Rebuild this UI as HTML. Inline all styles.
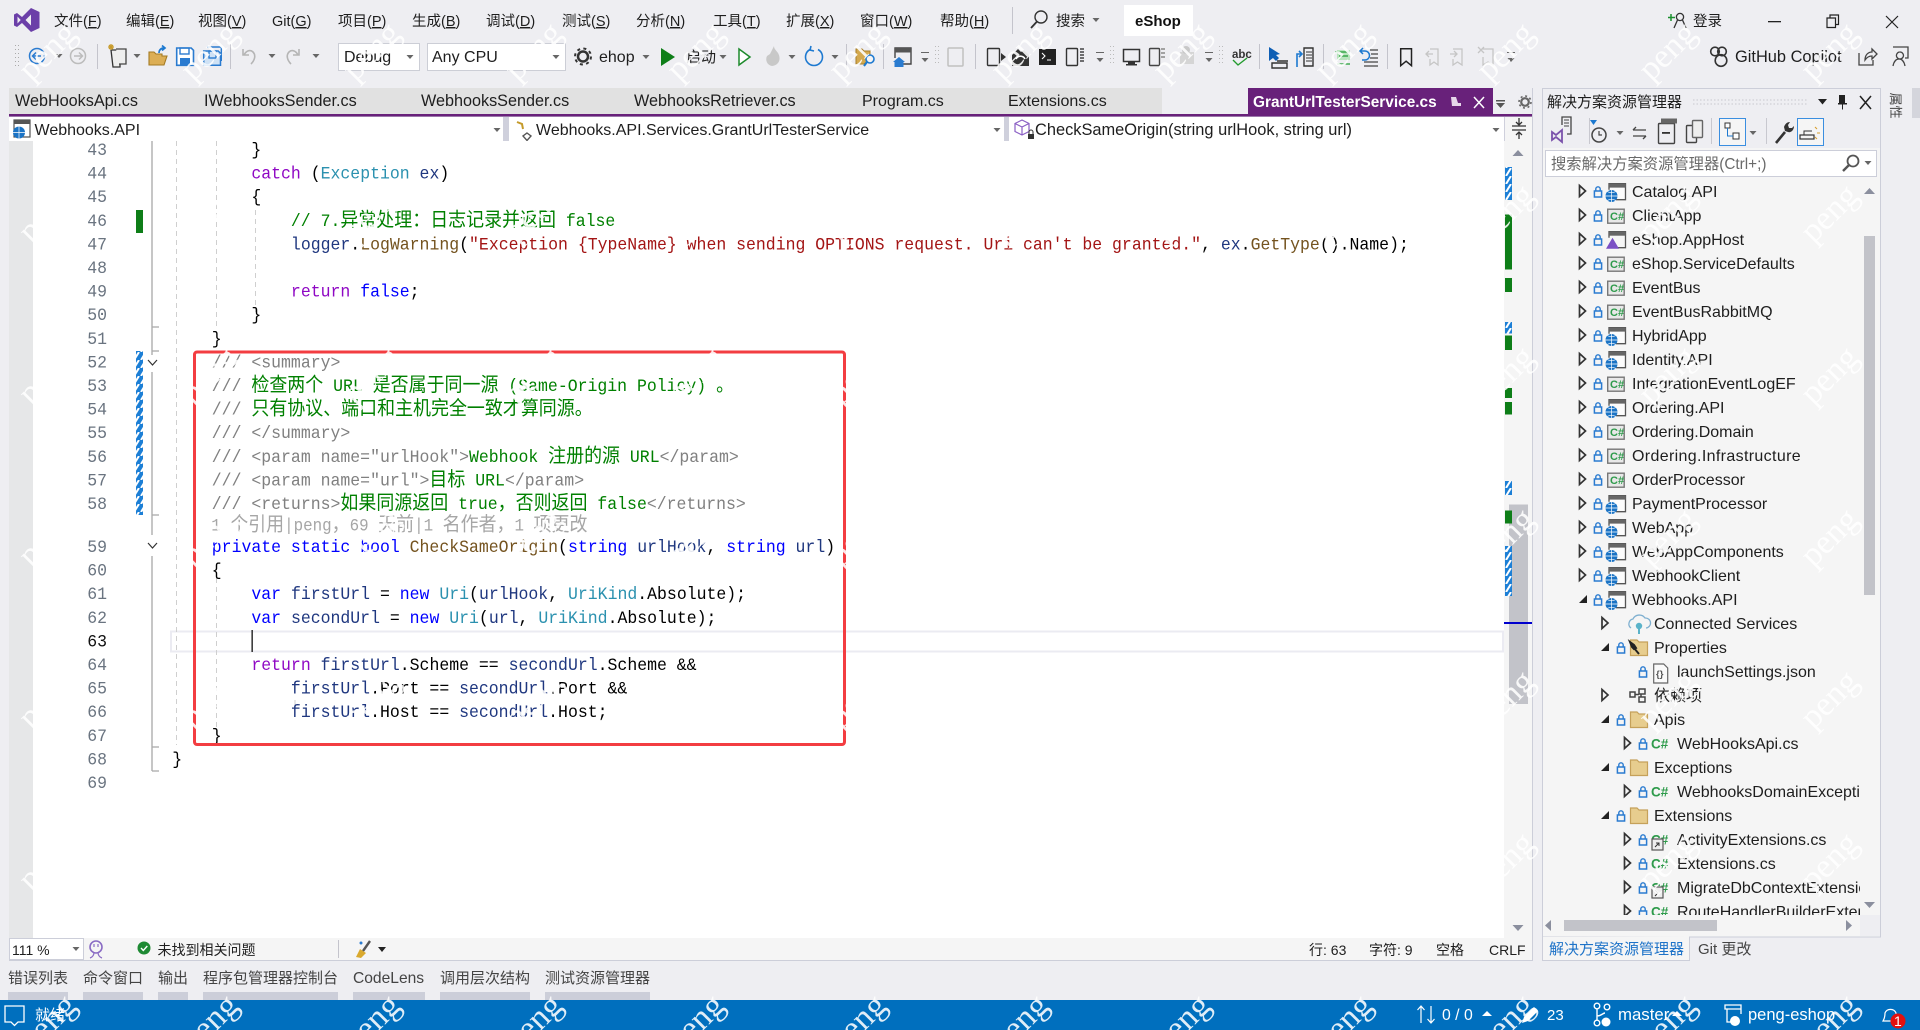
<!DOCTYPE html>
<html lang="zh-CN">
<head>
<meta charset="utf-8">
<title>eShop - Visual Studio</title>
<style>
html,body{margin:0;padding:0;background:#eeeef2;width:1920px;height:1030px;overflow:hidden}
svg{display:block}
text{font-family:"Liberation Sans","Noto Sans CJK SC",sans-serif;white-space:pre;fill:#1e1e1e}
.m{font-size:14.5px}
.f16{font-size:16px}
.f15{font-size:15px}
.f14{font-size:14px}
.tb{font-size:16.2px}
.c{font-family:"Liberation Mono","Noto Sans CJK SC",monospace;font-size:18px;fill:#000}
.ln{font-family:"Liberation Mono",monospace;font-size:18px;fill:#6a7480;text-anchor:end}
.z{font-family:"Noto Sans CJK SC",sans-serif;font-size:19.6px}
.k{fill:#0000ff}.p{fill:#8f08c4}.t{fill:#2b91af}.s{fill:#a31515}.g{fill:#008000}.d{fill:#808080}.n{fill:#1f377f}.h{fill:#74531f}
.tr{font-size:16px;fill:#1e1e1e}
.w{fill:#fff}
.u{text-decoration:underline}
</style>
</head>
<body>
<svg xmlns="http://www.w3.org/2000/svg" width="1920" height="1030" viewBox="0 0 1920 1030">
<defs>
<pattern id="wm" x="-34" y="-30" width="162" height="162" patternUnits="userSpaceOnUse">
<text x="81" y="92" text-anchor="middle" transform="rotate(-45 81 81)" style="font-family:'Liberation Serif',serif;font-size:34px;fill:#fff;fill-opacity:.88">peng</text>
</pattern>
<pattern id="hatch" width="7" height="8" patternUnits="userSpaceOnUse">
<rect width="7" height="8" fill="#1c7fd6"/><path d="M1 8L6 0" stroke="#fff" stroke-width="2"/>
</pattern>
<path id="car" d="M-3.5 -2H3.5L0 2z" fill="#666"/>
<path id="ctri" d="M-3 -5.5L3 0L-3 5.5z" fill="none" stroke="#333" stroke-width="1.7"/>
<path id="etri" d="M4 -4V4H-4z" fill="#222"/>
<g id="lock"><rect x="-3.6" y="-1" width="7.2" height="6" fill="none" stroke="#2a7bd0" stroke-width="1.5"/><path d="M-2.2 -1V-3A2.2 2.2 0 0 1 2.2 -3V-1" fill="none" stroke="#2a7bd0" stroke-width="1.4"/></g>
<g id="web"><path d="M2 -2V-8H18.5V8H9" fill="none" stroke="#555" stroke-width="1.3"/><rect x="2" y="-8" width="16.5" height="4" fill="#666"/><rect x="3" y="-4" width="14.5" height="11" fill="#fff" fill-opacity=".7"/><circle cx="4.5" cy="4.3" r="6" fill="#1a73c5"/><path d="M-1.5 4.3H10.5M4.5 -1.7V10.3M.5 0Q4.5 2 8.5 0M.5 8.6Q4.5 6.6 8.5 8.6" stroke="#fff" stroke-width=".7" fill="none"/></g>
<g id="cs"><rect x="0.7" y="-6.5" width="16.5" height="14" fill="#e8e8e8" stroke="#777" stroke-width="1.4"/><text x="3" y="4.4" style="font-size:11px;font-weight:bold;fill:#2e9b4b">C#</text></g>
<g id="host"><path d="M2 -2V-8H18.5V8H9" fill="none" stroke="#555" stroke-width="1.3"/><rect x="2" y="-8" width="16.5" height="4" fill="#666"/><path d="M-1 9L5.5 -2L12 9z" fill="#7a4fc4"/></g>
<g id="fol"><path d="M0.5 -7.5H7L9 -5.5H17.5V8H0.5z" fill="#e7cd8e" stroke="#c5a15a" stroke-width="1.2"/></g>
<text id="csf" x="0" y="5" style="font-size:13.5px;font-weight:bold;fill:#2e9b4b">C#</text>
</defs>

<!-- background -->
<rect width="1920" height="1030" fill="#eeeef2"/>

<!-- title bar -->
<path fill-rule="evenodd" d="M31 8l8.5 4v16L31 32l-9-9-5 4-3-1.5v-11l3-1.5 5 4zM31 14.5l-5.5 5.500 5.500 5.500zM17.500 16.500v7l3.200-3.500z" fill="#6b3fa8"/>
<text class="m" x="54" y="26">文件(<tspan class="u">F</tspan>)</text>
<text class="m" x="126" y="26">编辑(<tspan class="u">E</tspan>)</text>
<text class="m" x="198" y="26">视图(<tspan class="u">V</tspan>)</text>
<text class="m" x="272" y="26">Git(<tspan class="u">G</tspan>)</text>
<text class="m" x="338" y="26">项目(<tspan class="u">P</tspan>)</text>
<text class="m" x="412" y="26">生成(<tspan class="u">B</tspan>)</text>
<text class="m" x="486" y="26">调试(<tspan class="u">D</tspan>)</text>
<text class="m" x="562" y="26">测试(<tspan class="u">S</tspan>)</text>
<text class="m" x="636" y="26">分析(<tspan class="u">N</tspan>)</text>
<text class="m" x="713" y="26">工具(<tspan class="u">T</tspan>)</text>
<text class="m" x="786" y="26">扩展(<tspan class="u">X</tspan>)</text>
<text class="m" x="860" y="26">窗口(<tspan class="u">W</tspan>)</text>
<text class="m" x="940" y="26">帮助(<tspan class="u">H</tspan>)</text>
<rect x="1012" y="7" width="1" height="27" fill="#c4c4cc"/>
<circle cx="1041" cy="17" r="6" fill="none" stroke="#333" stroke-width="1.4"/><path d="M1037 21.5L1031 28" stroke="#333" stroke-width="1.8"/>
<text class="m" x="1056" y="26">搜索</text>
<use href="#car" x="1096" y="20"/>
<rect x="1124" y="5" width="69" height="31" fill="#fff"/>
<text x="1135" y="26" style="font-size:15px;font-weight:bold;fill:#111">eShop</text>
<path d="M1671 14v7M1668 17.5h7" stroke="#1a8f2e" stroke-width="1.5"/>
<circle cx="1680" cy="17" r="3.6" fill="none" stroke="#333" stroke-width="1.3"/><path d="M1674 28l3.5-8M1686 28l-3.5-8" stroke="#333" stroke-width="1.3" fill="none"/>
<text class="m" x="1693" y="26">登录</text>
<rect x="1768" y="21" width="13" height="1.3" fill="#222"/>
<path d="M1827 18h8.5v9.5h-8.5zM1830 18v-3h8.5v9.5h-3" fill="none" stroke="#222" stroke-width="1.2"/>
<path d="M1886 16l12 12M1898 16l-12 12" stroke="#222" stroke-width="1.2"/>

<!-- toolbar -->
<g fill="#aaa"><path d="M15 45h1v1h-1zM18 45h1v1h-1zM15 49h1v1h-1zM18 49h1v1h-1zM15 53h1v1h-1zM18 53h1v1h-1zM15 57h1v1h-1zM18 57h1v1h-1zM15 61h1v1h-1zM18 61h1v1h-1zM15 65h1v1h-1zM18 65h1v1h-1z"/></g>
<circle cx="37" cy="56" r="7.5" fill="none" stroke="#2a7bd0" stroke-width="1.5"/><path d="M41 56h-8M36 52.5L32.5 56l3.5 3.5" fill="none" stroke="#2a7bd0" stroke-width="1.5"/>
<use href="#car" x="59" y="56"/>
<circle cx="78" cy="56" r="7.5" fill="none" stroke="#bcbcbc" stroke-width="1.5"/><path d="M74 56h8M79 52.5L82.5 56 79 59.5" fill="none" stroke="#bcbcbc" stroke-width="1.5"/>
<rect x="97" y="44" width="1" height="25" fill="#c4c4cc"/>
<path d="M111 50h9v17h-7z" fill="#eee" stroke="#333" stroke-width="1.3"/><path d="M116 49h10v15h-7" fill="#eee" stroke="#444" stroke-width="1.3"/>
<path d="M111 44v6M108 47h6M109 45l4 4M113 45l-4 4" stroke="#c79a2b" stroke-width="1.3"/>
<use href="#car" x="137" y="56"/>
<path d="M149 65V52h5l2 2h6v2h5l-3 9z" fill="#dcae55" stroke="#a47b24" stroke-width="1.1"/><path d="M159 53c0-3 2-5 5-5M162 45.5l3 2.5-3 2.5" fill="none" stroke="#1d79d0" stroke-width="1.7"/>
<path d="M176.7 48h14.5l2.3 2.3v15h-16.8z" fill="#fff" stroke="#2a7bd0" stroke-width="1.6"/><rect x="180" y="48" width="9" height="6" fill="none" stroke="#2a7bd0" stroke-width="1.4"/><rect x="180" y="58" width="10" height="7" fill="#2a7bd0"/>
<path d="M203.7 51h14.5l2.3 2.3v12h-16.8z" fill="#cfe2f5" stroke="#2a7bd0" stroke-width="1.5"/><path d="M207 47h13.5l.8 1v13" fill="none" stroke="#2a7bd0" stroke-width="1.4"/><rect x="209" y="51" width="7" height="7" fill="none" stroke="#2a7bd0" stroke-width="1.4"/>
<rect x="230" y="44" width="1" height="25" fill="#c4c4cc"/>
<path d="M243 49v6h6M244 55c2-4 6-6 9-3 3 3 2 8-2 12" fill="none" stroke="#b5b5b5" stroke-width="1.6"/>
<use href="#car" x="272" y="56"/>
<path d="M299 49v6h-6M298 55c-2-4-6-6-9-3-3 3-2 8 2 12" fill="none" stroke="#b5b5b5" stroke-width="1.6"/>
<use href="#car" x="316" y="56"/>
<rect x="338.500" y="43.500" width="81" height="27" fill="#fff" stroke="#ccced6"/>
<text class="f16" x="344" y="62">Debug</text>
<use href="#car" x="410" y="57"/>
<rect x="427.500" y="43.500" width="138" height="27" fill="#fff" stroke="#ccced6"/>
<text class="f16" x="432" y="62">Any CPU</text>
<use href="#car" x="556" y="57"/>
<circle cx="583" cy="56.500" r="5" fill="none" stroke="#333" stroke-width="2.5"/><circle cx="583" cy="56.500" r="8" fill="none" stroke="#333" stroke-width="2" stroke-dasharray="3 3.3"/>
<text class="f16" x="599" y="62">ehop</text>
<use href="#car" x="646" y="57"/>
<path d="M661 48L675 57L661 66z" fill="#0e7e18"/>
<text class="f15" x="686" y="62">启动</text>
<use href="#car" x="723" y="57"/>
<path d="M739 49L750 57L739 65z" fill="#fff" stroke="#1d8a2c" stroke-width="1.5"/>
<path d="M772 66c-5-1-7-6-5-10l3-2 1-2 3-6c0 3 2 4 4 7 3 5 2 12-6 13z" fill="#c8c8c8"/>
<use href="#car" x="792" y="57"/>
<path d="M818 49.500a8.500 8.500 0 1 1-8 0M811 46l-1 4 4 1" fill="none" stroke="#1d79d0" stroke-width="1.6"/>
<use href="#car" x="835" y="57"/>
<rect x="846" y="44" width="1" height="25" fill="#c4c4cc"/>
<path d="M856 64V49h6l2 2h6v8l-6 5z" fill="#d4a94e" stroke="#a87f2a"/>
<circle cx="870" cy="59" r="4" fill="#f4f4f4" stroke="#1d79d0" stroke-width="1.6"/><path d="M867 62l-3 4" stroke="#1d79d0" stroke-width="2"/>
<rect x="883" y="44" width="1" height="25" fill="#c4c4cc"/>
<path d="M895 58V48h16v16h-9" fill="none" stroke="#444" stroke-width="1.4"/><rect x="895" y="48" width="16" height="4.500" fill="#555"/>
<path d="M893 62l6-5 6 5h-1.500v5h-9v-5z" fill="#2a7bd0"/>
<use href="#car" x="925" y="60"/><rect x="921" y="52" width="8" height="1" fill="#666"/>
<g fill="#bbb"><path d="M935 46h1v1h-1zM938 46h1v1h-1zM935 50h1v1h-1zM938 50h1v1h-1zM935 54h1v1h-1zM938 54h1v1h-1zM935 58h1v1h-1zM938 58h1v1h-1zM935 62h1v1h-1zM938 62h1v1h-1z"/></g>
<rect x="948" y="48" width="15" height="18" rx="1" fill="none" stroke="#c0c0c0" stroke-width="1.5"/>
<rect x="975" y="44" width="1" height="25" fill="#c4c4cc"/>
<rect x="987.500" y="48.500" width="12" height="17" rx="1" fill="none" stroke="#333" stroke-width="1.4"/><path d="M1001 53l5 4-5 4z" fill="#333"/>
<path d="M1012 55l6-6 3 3 3-2 5 5v11h-17z" fill="#333"/><path d="M1016 59a5 5 0 0 1 9 0" fill="none" stroke="#fff" stroke-width="1.6"/>
<rect x="1039" y="49" width="17" height="16" fill="#222"/><path d="M1042 53l3 3-3 3M1047 60h4" fill="none" stroke="#fff" stroke-width="1.1"/>
<rect x="1066.500" y="48.500" width="11" height="17" rx="1" fill="none" stroke="#333" stroke-width="1.4"/><path d="M1080 49h4M1080 52h4M1080 55h4M1080 58h4M1080 61h4" stroke="#444" stroke-width="1.4"/>
<use href="#car" x="1100" y="60"/><rect x="1096" y="52" width="8" height="1" fill="#666"/>
<g fill="#bbb"><path d="M1110 46h1v1h-1zM1113 46h1v1h-1zM1110 50h1v1h-1zM1113 50h1v1h-1zM1110 54h1v1h-1zM1113 54h1v1h-1zM1110 58h1v1h-1zM1113 58h1v1h-1zM1110 62h1v1h-1zM1113 62h1v1h-1z"/></g>
<rect x="1123.500" y="49.500" width="16" height="12" fill="none" stroke="#333" stroke-width="1.5"/><rect x="1128" y="62" width="7" height="2" fill="#333"/><rect x="1126" y="64" width="11" height="1.500" fill="#333"/>
<rect x="1149.500" y="48.500" width="10" height="17" rx="1" fill="none" stroke="#444" stroke-width="1.4"/><path d="M1161 49h4M1161 53h4M1161 57h4" stroke="#888" stroke-width="1.4"/>
<rect x="1180" y="52" width="14" height="12" fill="#d5d5d5"/><circle cx="1186" cy="50" r="4" fill="#c8c8c8"/>
<use href="#car" x="1209" y="60"/><rect x="1205" y="52" width="8" height="1" fill="#666"/>
<g fill="#bbb"><path d="M1219 46h1v1h-1zM1222 46h1v1h-1zM1219 50h1v1h-1zM1222 50h1v1h-1zM1219 54h1v1h-1zM1222 54h1v1h-1zM1219 58h1v1h-1zM1222 58h1v1h-1zM1219 62h1v1h-1zM1222 62h1v1h-1z"/></g>
<text x="1232" y="58" style="font-size:11.5px;font-weight:bold;fill:#333">abc</text>
<path d="M1233 60l5 5 9-7" fill="none" stroke="#239b2e" stroke-width="1.4"/>
<rect x="1259" y="44" width="1" height="25" fill="#c4c4cc"/>
<path d="M1269 47v14l4-3 3 3 3-3-3-3 4-1z" fill="#0f5fb5"/><path d="M1272 63h15v5h-15zM1277 61h11" fill="none" stroke="#333" stroke-width="1.4"/>
<path d="M1297 67V54h4M1299 51l3 3-3 3" fill="none" stroke="#1d79d0" stroke-width="1.6"/><path d="M1304 48h9v18h-9z" fill="none" stroke="#333" stroke-width="1.4"/><path d="M1306 52h6M1306 55h6M1306 58h6M1306 61h6" stroke="#333"/>
<rect x="1323" y="44" width="1" height="25" fill="#c4c4cc"/>
<rect x="1337" y="50" width="13" height="10" fill="#b9e4bd"/><path d="M1335 52h15M1339 56h9M1337 64h13" stroke="#1f9e33" stroke-width="1.2"/>
<path d="M1363 48l-3 3 3 3M1361 51h4a4.500 4.500 0 0 1 0 9h-3" fill="none" stroke="#1d79d0" stroke-width="1.5"/><path d="M1370 50h8M1371 54h7M1370 58h8M1364 62h14M1364 66h14" stroke="#444" stroke-width="1.2"/>
<rect x="1387" y="44" width="1" height="25" fill="#c4c4cc"/>
<path d="M1400.700 48.700h10.800v17l-5.400-4.500-5.400 4.500z" fill="none" stroke="#222" stroke-width="1.5"/>
<path d="M1430 49h8v16l-4-3-4 3v-6M1433 54h-7M1429 51l-3 3 3 3" fill="none" stroke="#c5c5c5" stroke-width="1.3"/>
<path d="M1453 49h9v16l-4.500-3-4.500 3v-6M1450 54h7M1454 51l3 3-3 3" fill="none" stroke="#c5c5c5" stroke-width="1.3"/>
<path d="M1482 49h11v16l-5-3-5 3v-8M1478 47l6 6M1484 47l-6 6" fill="none" stroke="#c5c5c5" stroke-width="1.3"/>
<use href="#car" x="1511" y="60"/><rect x="1507" y="52" width="8" height="1" fill="#666"/>
<circle cx="1715" cy="51.500" r="4.300" fill="none" stroke="#333" stroke-width="1.600"/><circle cx="1722" cy="51.500" r="4.300" fill="none" stroke="#333" stroke-width="1.600"/><circle cx="1721" cy="60.500" r="5.800" fill="none" stroke="#333" stroke-width="1.600"/>
<text x="1735" y="62" style="font-size:16.400px">GitHub Copilot</text>
<path d="M1859 53v12h14v-5M1865 60c0-5 3-8 7-8v-3l5 5-5 5v-3c-3 0-5 1-7 4z" fill="none" stroke="#444" stroke-width="1.3"/>
<path d="M1893 47h15v11h-3M1900 52a3.500 3.500 0 1 1-.1 0M1893 66c1-5 3-7 6-7s5 2 6 7" fill="none" stroke="#444" stroke-width="1.3"/>

<!-- document tabs -->
<rect x="9" y="88" width="1153" height="26" fill="#e1e1e1"/>
<text class="tb" x="15" y="106">WebHooksApi.cs</text>
<text class="tb" x="204" y="106">IWebhooksSender.cs</text>
<text class="tb" x="421" y="106">WebhooksSender.cs</text>
<text class="tb" x="634" y="106">WebhooksRetriever.cs</text>
<text class="f16" x="862" y="106">Program.cs</text>
<text class="f16" x="1008" y="106">Extensions.cs</text>
<rect x="1248" y="88" width="245" height="27" fill="#68217a"/>
<text class="w" x="1253" y="107" style="font-size:15.400px;font-weight:bold">GrantUrlTesterService.cs</text>
<path d="M1451 97h5l2 6h3v3h-9z" fill="#e6d6ea"/>
<path d="M1474 97l10 11M1484 97l-10 11" stroke="#fff" stroke-width="1.5"/>
<path d="M1496 100h9v1.500h-9zM1496 103h9l-4.500 5z" fill="#555"/>
<circle cx="1525" cy="102" r="3.800" fill="none" stroke="#666" stroke-width="2.200"/><circle cx="1525" cy="102" r="6" fill="none" stroke="#666" stroke-width="1.600" stroke-dasharray="2 2.700"/>
<rect x="9" y="114" width="1523" height="2.500" fill="#68217a"/>

<!-- navigation bars -->
<rect x="9" y="116.500" width="1523" height="25" fill="#cfd0dc"/>
<rect x="9" y="117" width="494" height="24" fill="#fff"/>
<rect x="509" y="117" width="495" height="24" fill="#fff"/>
<rect x="1009" y="117" width="495" height="24" fill="#fff"/>
<rect x="1505" y="117" width="27" height="24" fill="#f5f5f5"/>
<path d="M14 120h16v17h-16z" fill="none" stroke="#555" stroke-width="1.200"/><rect x="14" y="120" width="16" height="4" fill="#555"/>
<circle cx="19" cy="132.500" r="6" fill="#1a73c5"/><path d="M13 132.500h12M19 126.500v12" stroke="#fff" stroke-width=".7"/>
<text class="f16" x="34.500" y="135">Webhooks.API</text>
<use href="#car" x="497" y="130"/>
<path d="M517 122l5 2 1 5" fill="none" stroke="#c49a2a" stroke-width="2"/><path d="M527 133l4 3-4 4.500-4-4.500z" fill="none" stroke="#555" stroke-width="1.400"/>
<text class="f16" x="536" y="135">Webhooks.API.Services.GrantUrlTesterService</text>
<use href="#car" x="997" y="130"/>
<path d="M1022 120l7 3.500v8l-7 3.500-7-3.500v-8zM1015 123.500l7 3.500 7-3.500M1022 127v8" fill="none" stroke="#8a5fc4" stroke-width="1.200"/>
<rect x="1028" y="134" width="6" height="5" fill="#333"/><path d="M1029 134v-2a2 2 0 0 1 4 0v2" fill="none" stroke="#333"/>
<text x="1035" y="135" style="font-size:16.400px">CheckSameOrigin(string urlHook, string url)</text>
<use href="#car" x="1496" y="130"/>
<path d="M1512 126h14M1512 130h14M1519 118v7M1516 122l3 3 3-3M1519 132v7M1516 135l3-3 3 3" fill="none" stroke="#333" stroke-width="1.300"/>

<!-- editor -->
<rect x="9" y="141" width="24" height="797" fill="#e6e7e8"/>
<rect x="33" y="141" width="1471" height="797" fill="#fff"/>
<rect x="1504" y="141" width="28" height="797" fill="#f5f5f5"/>

<!-- current line -->
<rect x="171" y="631.500" width="1332" height="20" fill="none" stroke="#ebebf2" stroke-width="2"/>

<!-- guides -->
<g stroke="#cfcfcf" stroke-dasharray="5 4" fill="none">
<path d="M176.500 141V745"/>
<path d="M216.500 141V330M216.500 578V735"/>
<path d="M255.500 210V312"/>
<path d="M295 700V715"/>
</g>

<!-- outline margin -->
<path d="M152 141V355M152 372V535M152 556V771M152 327H159M152 351H159M152 515H159M152 747H159M152 771H159" fill="none" stroke="#a8a8a8" stroke-width="1.300"/>
<path d="M148 360l4.500 5 4.500-5M148 543l4.500 5 4.500-5" fill="none" stroke="#333" stroke-width="1.200"/>

<!-- change bars -->
<rect x="136" y="210" width="7" height="23" fill="#0e7e18"/>
<rect x="136" y="351" width="7" height="164" fill="url(#hatch)"/>

<!-- line numbers -->
<g transform="translate(0,-1)">
<text class="ln" transform="translate(107,156) scale(.9167,1)">43</text>
<text class="ln" transform="translate(107,179.600) scale(.9167,1)">44</text>
<text class="ln" transform="translate(107,203.200) scale(.9167,1)">45</text>
<text class="ln" transform="translate(107,226.800) scale(.9167,1)">46</text>
<text class="ln" transform="translate(107,250.400) scale(.9167,1)">47</text>
<text class="ln" transform="translate(107,274) scale(.9167,1)">48</text>
<text class="ln" transform="translate(107,297.600) scale(.9167,1)">49</text>
<text class="ln" transform="translate(107,321.200) scale(.9167,1)">50</text>
<text class="ln" transform="translate(107,344.800) scale(.9167,1)">51</text>
<text class="ln" transform="translate(107,368.400) scale(.9167,1)">52</text>
<text class="ln" transform="translate(107,392) scale(.9167,1)">53</text>
<text class="ln" transform="translate(107,415.600) scale(.9167,1)">54</text>
<text class="ln" transform="translate(107,439.200) scale(.9167,1)">55</text>
<text class="ln" transform="translate(107,462.800) scale(.9167,1)">56</text>
<text class="ln" transform="translate(107,486.400) scale(.9167,1)">57</text>
<text class="ln" transform="translate(107,510) scale(.9167,1)">58</text>
<text class="ln" transform="translate(107,553) scale(.9167,1)">59</text>
<text class="ln" transform="translate(107,576.600) scale(.9167,1)">60</text>
<text class="ln" transform="translate(107,600.200) scale(.9167,1)">61</text>
<text class="ln" transform="translate(107,623.800) scale(.9167,1)">62</text>
<text class="ln" transform="translate(107,647.400) scale(.9167,1)" style="fill:#111">63</text>
<text class="ln" transform="translate(107,671) scale(.9167,1)">64</text>
<text class="ln" transform="translate(107,694.600) scale(.9167,1)">65</text>
<text class="ln" transform="translate(107,718.200) scale(.9167,1)">66</text>
<text class="ln" transform="translate(107,741.800) scale(.9167,1)">67</text>
<text class="ln" transform="translate(107,765.400) scale(.9167,1)">68</text>
<text class="ln" transform="translate(107,789) scale(.9167,1)">69</text>
</g>

<!-- code -->
<g transform="translate(-.8,-1)">
<text class="c" transform="translate(173,156) scale(.9167,1)">        }</text>
<text class="c" transform="translate(173,179.600) scale(.9167,1)">        <tspan class="p">catch</tspan> (<tspan class="t">Exception</tspan> <tspan class="n">ex</tspan>)</text>
<text class="c" transform="translate(173,203.200) scale(.9167,1)">        {</text>
<text class="c" transform="translate(173,226.800) scale(.9167,1)"><tspan class="g">            // 7.<tspan class="z">异常处理：日志记录并返回</tspan> false</tspan></text>
<text class="c" transform="translate(173,250.400) scale(.9167,1)">            <tspan class="n">logger</tspan>.<tspan class="h">LogWarning</tspan>(<tspan class="s">"Exception {TypeName} when sending OPTIONS request. Uri can't be granted."</tspan>, <tspan class="n">ex</tspan>.<tspan class="h">GetType</tspan>().Name);</text>
<text class="c" transform="translate(173,297.600) scale(.9167,1)">            <tspan class="p">return</tspan> <tspan class="k">false</tspan>;</text>
<text class="c" transform="translate(173,321.200) scale(.9167,1)">        }</text>
<text class="c" transform="translate(173,344.800) scale(.9167,1)">    }</text>
<text class="c" transform="translate(173,368.400) scale(.9167,1)">    <tspan class="d">/// &lt;summary&gt;</tspan></text>
<text class="c" transform="translate(173,392) scale(.9167,1)">    <tspan class="d">/// </tspan><tspan class="g"><tspan class="z">检查两个</tspan> URL <tspan class="z">是否属于同一源</tspan> (Same-Origin Policy) <tspan class="z">。</tspan></tspan></text>
<text class="c" transform="translate(173,415.600) scale(.9167,1)">    <tspan class="d">/// </tspan><tspan class="g z">只有协议、端口和主机完全一致才算同源。</tspan></text>
<text class="c" transform="translate(173,439.200) scale(.9167,1)">    <tspan class="d">/// &lt;/summary&gt;</tspan></text>
<text class="c" transform="translate(173,462.800) scale(.9167,1)">    <tspan class="d">/// &lt;param name="urlHook"&gt;</tspan><tspan class="g">Webhook <tspan class="z">注册的源</tspan> URL</tspan><tspan class="d">&lt;/param&gt;</tspan></text>
<text class="c" transform="translate(173,486.400) scale(.9167,1)">    <tspan class="d">/// &lt;param name="url"&gt;</tspan><tspan class="g"><tspan class="z">目标</tspan> URL</tspan><tspan class="d">&lt;/param&gt;</tspan></text>
<text class="c" transform="translate(173,510) scale(.9167,1)">    <tspan class="d">/// &lt;returns&gt;</tspan><tspan class="g"><tspan class="z">如果同源返回</tspan> true<tspan class="z">，否则返回</tspan> false</tspan><tspan class="d">&lt;/returns&gt;</tspan></text>
<text class="c" transform="translate(212,531.500) scale(.9167,1)" style="font-size:17.300px;fill:#a6a6a6">1 <tspan class="z" style="font-size:19.600px;fill:#a6a6a6">个引用</tspan>|peng<tspan class="z" style="font-size:19.600px;fill:#a6a6a6">，</tspan>69 <tspan class="z" style="font-size:19.600px;fill:#a6a6a6">天前</tspan>|1 <tspan class="z" style="font-size:19.600px;fill:#a6a6a6">名作者，</tspan>1 <tspan class="z" style="font-size:19.600px;fill:#a6a6a6">项更改</tspan></text>
<text class="c" transform="translate(173,553) scale(.9167,1)">    <tspan class="k">private static bool</tspan> <tspan class="h">CheckSameOrigin</tspan>(<tspan class="k">string</tspan> <tspan class="n">urlHook</tspan>, <tspan class="k">string</tspan> <tspan class="n">url</tspan>)</text>
<text class="c" transform="translate(173,576.600) scale(.9167,1)">    {</text>
<text class="c" transform="translate(173,600.200) scale(.9167,1)">        <tspan class="k">var</tspan> <tspan class="n">firstUrl</tspan> = <tspan class="k">new</tspan> <tspan class="t">Uri</tspan>(<tspan class="n">urlHook</tspan>, <tspan class="t">UriKind</tspan>.Absolute);</text>
<text class="c" transform="translate(173,623.800) scale(.9167,1)">        <tspan class="k">var</tspan> <tspan class="n">secondUrl</tspan> = <tspan class="k">new</tspan> <tspan class="t">Uri</tspan>(<tspan class="n">url</tspan>, <tspan class="t">UriKind</tspan>.Absolute);</text>
<text class="c" transform="translate(173,671) scale(.9167,1)">        <tspan class="p">return</tspan> <tspan class="n">firstUrl</tspan>.Scheme == <tspan class="n">secondUrl</tspan>.Scheme &amp;&amp;</text>
<text class="c" transform="translate(173,694.600) scale(.9167,1)">            <tspan class="n">firstUrl</tspan>.Port == <tspan class="n">secondUrl</tspan>.Port &amp;&amp;</text>
<text class="c" transform="translate(173,718.200) scale(.9167,1)">            <tspan class="n">firstUrl</tspan>.Host == <tspan class="n">secondUrl</tspan>.Host;</text>
<text class="c" transform="translate(173,741.800) scale(.9167,1)">    }</text>
<text class="c" transform="translate(173,765.400) scale(.9167,1)">}</text>
</g>
<rect x="251.500" y="630" width="1.300" height="22" fill="#111"/>

<!-- red highlight -->
<rect x="194.500" y="352" width="650" height="392.500" rx="2.500" fill="none" stroke="#f33d41" stroke-width="3"/>

<!-- overview margin -->
<path d="M1518 150l5.500 6h-11z" fill="#8b8f9e"/>
<path d="M1512.500 925h11l-5.500 6z" fill="#8b8f9e"/>
<rect x="1509" y="504.500" width="19" height="199.500" fill="#c2c3c9"/>
<rect x="1505" y="167" width="7" height="33" fill="url(#hatch)"/>
<rect x="1505" y="214.500" width="7" height="55" fill="#0e7e18"/>
<rect x="1505" y="278" width="7" height="14" fill="#0e7e18"/>
<rect x="1505" y="322" width="7" height="11.500" fill="url(#hatch)"/>
<rect x="1505" y="335.500" width="7" height="14.500" fill="#0e7e18"/>
<rect x="1505" y="388" width="7" height="10" fill="#0e7e18"/>
<rect x="1505" y="402" width="7" height="12.500" fill="#0e7e18"/>
<rect x="1505" y="481" width="7" height="14" fill="url(#hatch)"/>
<rect x="1505" y="510.500" width="7" height="13" fill="#0e7e18"/>
<rect x="1505" y="546" width="7" height="50" fill="url(#hatch)"/>
<rect x="1504" y="622" width="29" height="2" fill="#0000cd"/>

<!-- editor status strip -->
<rect x="9" y="938" width="1523" height="22" fill="#f5f5f5"/>
<rect x="9.500" y="938.500" width="74" height="21" fill="#fff" stroke="#ccced9"/>
<text class="f14" x="12" y="955">111 %</text>
<use href="#car" x="76" y="949"/>
<circle cx="96" cy="947" r="6" fill="none" stroke="#8a6cc4" stroke-width="1.600"/><path d="M90 958c3-1 4-3 4-6M102 958c-3-1-4-3-4-6M94 944v3M98 944v3" fill="none" stroke="#8a6cc4" stroke-width="1.200"/>
<circle cx="144" cy="948" r="6.500" fill="#1e8a33"/><path d="M141 948l2.300 2.500 4-4.500" fill="none" stroke="#fff" stroke-width="1.400"/>
<text class="f14" x="157.500" y="955">未找到相关问题</text>
<rect x="338" y="940" width="1" height="18" fill="#c4c4cc"/>
<path d="M370 941l-7 10" stroke="#555" stroke-width="2.400"/><path d="M360 949l6 4-5 5-5-1z" fill="#d9a92e"/><circle cx="361" cy="943" r="1.500" fill="#2a7bd0"/>
<path d="M378 947h8l-4 5z" fill="#222"/>
<text class="f14" x="1309" y="955">行: 63</text>
<text class="f14" x="1369" y="955">字符: 9</text>
<text class="f14" x="1436" y="955">空格</text>
<text class="f14" x="1489" y="955">CRLF</text>
<rect x="9" y="960" width="1523" height="1" fill="#ccced9"/>
<rect x="1532" y="88" width="1" height="873" fill="#ccced9"/>

<!-- bottom tool tabs -->
<text class="f15" x="8" y="983" style="fill:#444">错误列表</text>
<text class="f15" x="83" y="983" style="fill:#444">命令窗口</text>
<text class="f15" x="158" y="983" style="fill:#444">输出</text>
<text class="f15" x="203" y="983" style="fill:#444">程序包管理器控制台</text>
<text x="353" y="983" style="font-size:15.600px;fill:#444">CodeLens</text>
<text class="f15" x="440" y="983" style="fill:#444">调用层次结构</text>
<text class="f15" x="545" y="983" style="fill:#444">测试资源管理器</text>
<g fill="#ccced9">
<rect x="8" y="992" width="60" height="8"/>
<rect x="83" y="992" width="60" height="8"/>
<rect x="158" y="992" width="30" height="8"/>
<rect x="203" y="992" width="135" height="8"/>
<rect x="353" y="992" width="72" height="8"/>
<rect x="440" y="992" width="90" height="8"/>
<rect x="545" y="992" width="105" height="8"/>
</g>

<!-- solution explorer -->
<rect x="1542" y="88" width="339" height="849" fill="#f5f5f5"/>
<rect x="1542" y="88" width="339" height="60" fill="#eeeef2"/>
<rect x="1542.500" y="88.500" width="338" height="848.500" fill="none" stroke="#ccced9"/>
<text class="f15" x="1547" y="107">解决方案资源管理器</text>
<path d="M1693 100h115M1693 104h115" stroke="#c8c8cf" stroke-dasharray="1.500 2"/>
<path d="M1818 99h9l-4.500 5.500z" fill="#222"/>
<path d="M1839 95h6v8h2v1.500h-4v5h-1v-5h-4V103h1z" fill="#222"/>
<path d="M1860 96l11 13M1871 96l-11 13" stroke="#222" stroke-width="1.500"/>
<!-- explorer toolbar -->
<path d="M1552 132l4 3 6-5v12l-6-5-4 3z" fill="none" stroke="#7b52ab" stroke-width="1.800"/>
<path d="M1562 125v-8h9v17h-4" fill="none" stroke="#444" stroke-width="1.300"/><path d="M1564 120h5M1564 123h5M1564 126h5" stroke="#444"/>
<rect x="1589" y="118" width="1" height="26" fill="#c8c8cf"/>
<path d="M1590 120h7l-3.500 5z" fill="#1d79d0"/>
<circle cx="1599" cy="135" r="7" fill="none" stroke="#444" stroke-width="1.500"/><path d="M1599 131v4h3" fill="none" stroke="#444" stroke-width="1.200"/>
<use href="#car" x="1620" y="133"/>
<path d="M1633 130h13M1636 127l-3 3M1646 136h-13M1643 139l3-3" fill="none" stroke="#444" stroke-width="1.300"/>
<rect x="1658.500" y="123.500" width="16" height="20" rx="1" fill="none" stroke="#444" stroke-width="1.400"/><rect x="1661" y="118.500" width="16" height="5" fill="#666"/><rect x="1662" y="132" width="8" height="1.800" fill="#333"/>
<rect x="1686.500" y="125.500" width="10" height="17" rx="1" fill="none" stroke="#444" stroke-width="1.400"/><rect x="1692.500" y="120.500" width="10" height="17" rx="1" fill="#eee" stroke="#666" stroke-width="1.400"/>
<rect x="1711" y="118" width="1" height="26" fill="#c8c8cf"/>
<rect x="1719.500" y="118.500" width="26" height="27" fill="#f5f5f5" stroke="#3a8ee0"/>
<rect x="1725" y="123" width="5" height="5" fill="#fff" stroke="#333"/><rect x="1733" y="133" width="6" height="6" fill="#fff" stroke="#333"/><path d="M1727.500 128v8h5.500" fill="none" stroke="#1d79d0"/>
<use href="#car" x="1753" y="133"/>
<rect x="1766" y="118" width="1" height="26" fill="#c8c8cf"/>
<path d="M1776 143l9-11" stroke="#333" stroke-width="2.600"/><path d="M1785 131l-1-4c1-3 3-5 6-5l-2 3 1 3 3 0 2-2c0 4-3 7-6 6z" fill="#333"/>
<rect x="1797.500" y="118.500" width="26" height="27" fill="#f5f5f5" stroke="#3a8ee0"/>
<rect x="1800" y="135" width="14" height="4" fill="none" stroke="#333" stroke-width="1.200"/><path d="M1804 135v-4h8" fill="none" stroke="#333"/><path d="M1815 127l2 2M1817 133h3M1815 137l2 2" stroke="#d8a030" stroke-width="1.100"/>
<!-- search -->
<rect x="1545.500" y="150.500" width="331" height="26" fill="#fff" stroke="#ccced9"/>
<text x="1551" y="169" style="font-size:15.300px;fill:#6a6a6a">搜索解决方案资源管理器(Ctrl+;)</text>
<circle cx="1853" cy="161" r="5.500" fill="none" stroke="#555" stroke-width="1.800"/><path d="M1849 165l-6 6" stroke="#555" stroke-width="2.400"/>
<use href="#car" x="1868" y="163"/>

<!-- tree -->
<svg x="1543" y="178" width="317" height="737" viewBox="1543 178 317 737">
<g id="treeL0">
<use href="#ctri" x="1582.500" y="191"/><use href="#lock" x="1598" y="192"/><use href="#web" x="1607" y="191.700"/><text class="tr" x="1632" y="197">Catalog.API</text>
<use href="#ctri" x="1582.500" y="215"/><use href="#lock" x="1598" y="216"/><use href="#cs" x="1607" y="215.700"/><text class="tr" x="1632" y="221">ClientApp</text>
<use href="#ctri" x="1582.500" y="239"/><use href="#lock" x="1598" y="240"/><use href="#host" x="1607" y="239.700"/><text class="tr" x="1632" y="245">eShop.AppHost</text>
<use href="#ctri" x="1582.500" y="263"/><use href="#lock" x="1598" y="264"/><use href="#cs" x="1607" y="263.700"/><text class="tr" x="1632" y="269">eShop.ServiceDefaults</text>
<use href="#ctri" x="1582.500" y="287"/><use href="#lock" x="1598" y="288"/><use href="#cs" x="1607" y="287.700"/><text class="tr" x="1632" y="293">EventBus</text>
<use href="#ctri" x="1582.500" y="311"/><use href="#lock" x="1598" y="312"/><use href="#cs" x="1607" y="311.700"/><text class="tr" x="1632" y="317">EventBusRabbitMQ</text>
<use href="#ctri" x="1582.500" y="335"/><use href="#lock" x="1598" y="336"/><use href="#web" x="1607" y="335.700"/><text class="tr" x="1632" y="341">HybridApp</text>
<use href="#ctri" x="1582.500" y="359"/><use href="#lock" x="1598" y="360"/><use href="#web" x="1607" y="359.700"/><text class="tr" x="1632" y="365">Identity.API</text>
<use href="#ctri" x="1582.500" y="383"/><use href="#lock" x="1598" y="384"/><use href="#cs" x="1607" y="383.700"/><text class="tr" x="1632" y="389">IntegrationEventLogEF</text>
<use href="#ctri" x="1582.500" y="407"/><use href="#lock" x="1598" y="408"/><use href="#web" x="1607" y="407.700"/><text class="tr" x="1632" y="413">Ordering.API</text>
<use href="#ctri" x="1582.500" y="431"/><use href="#lock" x="1598" y="432"/><use href="#cs" x="1607" y="431.700"/><text class="tr" x="1632" y="437">Ordering.Domain</text>
<use href="#ctri" x="1582.500" y="455"/><use href="#lock" x="1598" y="456"/><use href="#cs" x="1607" y="455.700"/><text class="tr" x="1632" y="461" style="letter-spacing:.35px">Ordering.Infrastructure</text>
<use href="#ctri" x="1582.500" y="479"/><use href="#lock" x="1598" y="480"/><use href="#cs" x="1607" y="479.700"/><text class="tr" x="1632" y="485">OrderProcessor</text>
<use href="#ctri" x="1582.500" y="503"/><use href="#lock" x="1598" y="504"/><use href="#web" x="1607" y="503.700"/><text class="tr" x="1632" y="509">PaymentProcessor</text>
<use href="#ctri" x="1582.500" y="527"/><use href="#lock" x="1598" y="528"/><use href="#web" x="1607" y="527.700"/><text class="tr" x="1632" y="533">WebApp</text>
<use href="#ctri" x="1582.500" y="551"/><use href="#lock" x="1598" y="552"/><use href="#web" x="1607" y="551.700"/><text class="tr" x="1632" y="557">WebAppComponents</text>
<use href="#ctri" x="1582.500" y="575"/><use href="#lock" x="1598" y="576"/><use href="#web" x="1607" y="575.700"/><text class="tr" x="1632" y="581">WebhookClient</text>
<use href="#etri" x="1583" y="599"/><use href="#lock" x="1598" y="600"/><use href="#web" x="1607" y="599.700"/><text class="tr" x="1632" y="605">Webhooks.API</text>
</g>
<g id="treeL1">
<use href="#ctri" x="1605" y="623"/>
<path d="M1631 628a5 5 0 0 1 2-9 7 7 0 0 1 12-1 5 5 0 0 1 1 10" fill="none" stroke="#7fb0d0" stroke-width="1.300"/><circle cx="1639" cy="626" r="3.200" fill="#5bb3c9"/><path d="M1639 629v5" stroke="#5bb3c9" stroke-width="2"/>
<text class="tr" x="1654" y="629">Connected Services</text>

<use href="#etri" x="1605" y="647"/><use href="#lock" x="1621" y="648"/><use href="#fol" x="1630" y="647.500"/>
<path d="M1630 642l4 3 2 3-2 1-2-2zM1634 648l5 6" stroke="#222" stroke-width="2" fill="#222"/>
<text class="tr" x="1654" y="653">Properties</text>

<use href="#lock" x="1643" y="672"/><path d="M1653.700 664h10l4 4v15h-14z" fill="#fafafa" stroke="#666" stroke-width="1.200"/><text x="1656" y="677" style="font-size:9.500px;font-weight:bold;fill:#555">{}</text>
<text class="tr" x="1677" y="677">launchSettings.json</text>

<use href="#ctri" x="1605" y="695"/>
<path d="M1630 692h5v5h-5zM1639 689h6v5h-6zM1639 697h6v5h-6zM1635 694.500h4M1641 694v3" fill="none" stroke="#444" stroke-width="1.500"/>
<text class="tr" x="1654" y="701">依赖项</text>

<use href="#etri" x="1605" y="719"/><use href="#lock" x="1621" y="720"/><use href="#fol" x="1630" y="719.500"/>
<text class="tr" x="1654" y="725">Apis</text>

<use href="#ctri" x="1627.500" y="743"/><use href="#lock" x="1643" y="744"/><use href="#csf" x="1651" y="743.500"/>
<text class="tr" x="1677" y="749">WebHooksApi.cs</text>

<use href="#etri" x="1605" y="767"/><use href="#lock" x="1621" y="768"/><use href="#fol" x="1630" y="767.500"/>
<text class="tr" x="1654" y="773">Exceptions</text>

<use href="#ctri" x="1627.500" y="791"/><use href="#lock" x="1643" y="792"/><use href="#csf" x="1651" y="791.500"/>
<text class="tr" x="1677" y="797">WebhooksDomainExceptions.cs</text>

<use href="#etri" x="1605" y="815"/><use href="#lock" x="1621" y="816"/><use href="#fol" x="1630" y="815.500"/>
<text class="tr" x="1654" y="821">Extensions</text>

<use href="#ctri" x="1627.500" y="839"/><use href="#lock" x="1643" y="840"/><use href="#csf" x="1651" y="839.500"/>
<rect x="1652" y="839" width="11" height="11" fill="#eee" stroke="#555" stroke-width="1.200"/><path d="M1655 847l4-4M1656 843h3v3" stroke="#333" fill="none"/>
<text class="tr" x="1677" y="845">ActivityExtensions.cs</text>

<use href="#ctri" x="1627.500" y="863"/><use href="#lock" x="1643" y="864"/><use href="#csf" x="1651" y="863.500"/>
<text class="tr" x="1677" y="869">Extensions.cs</text>

<use href="#ctri" x="1627.500" y="887"/><use href="#lock" x="1643" y="888"/><use href="#csf" x="1651" y="887.500"/>
<rect x="1652" y="887" width="11" height="11" fill="#eee" stroke="#555" stroke-width="1.200"/><path d="M1655 890l3 3-3 3" stroke="#333" fill="none"/>
<text class="tr" x="1677" y="893">MigrateDbContextExtensions.cs</text>

<use href="#ctri" x="1627.500" y="911"/><use href="#lock" x="1643" y="912"/><use href="#csf" x="1651" y="911.500"/>
<text class="tr" x="1677" y="917">RouteHandlerBuilderExtensions.cs</text>
</g>
</svg>

<!-- explorer scrollbars -->
<rect x="1864" y="236" width="11" height="359" fill="#c2c3c9"/>
<path d="M1869.500 188l5.500 6h-11z" fill="#8b8f9e"/>
<path d="M1864 902h11l-5.500 6z" fill="#8b8f9e"/>
<rect x="1543" y="915" width="337" height="21" fill="#f5f5f5"/>
<rect x="1860" y="915" width="20" height="21" fill="#eeeef2"/>
<rect x="1564" y="920" width="153" height="11" fill="#c2c3c9"/>
<path d="M1551 920v11l-6-5.500z" fill="#8b8f9e"/>
<path d="M1846 920v11l6-5.500z" fill="#8b8f9e"/>
<!-- explorer bottom tabs -->
<path d="M1542.500 937v23.500h147v-24" fill="#f5f5f5" stroke="#ccced9"/>
<text class="f15" x="1549" y="954" style="fill:#1e73c8">解决方案资源管理器</text>
<text class="f15" x="1698" y="954" style="fill:#444">Git 更改</text>

<!-- right vertical tab -->
<text x="-2" y="0" transform="translate(1891,91) rotate(90)" style="font-size:13px;fill:#444"> 属性</text>
<rect x="1912" y="88" width="8" height="30" fill="#d4d5dc"/>

<!-- status bar -->
<rect x="0" y="1000" width="1920" height="30" fill="#006fbe"/>
<path d="M5 1006h19v16h-6l-3.500 3.500-3.500-3.500h-6z" fill="none" stroke="#fff" stroke-width="1.300"/>
<text class="w f15" x="35" y="1020">就绪</text>
<path d="M1421 1006v17M1417.500 1010l3.500-4 3.500 4M1431 1006v17M1427.500 1019l3.500 4 3.500-4" fill="none" stroke="#fff" stroke-width="1.200"/>
<text class="w" x="1442" y="1020" style="font-size:15.800px">0 / 0</text>
<path d="M1482 1016h10l-5-5z" fill="#fff"/>
<path d="M1522 1023l2-6 10-10 4 4-10 10z" fill="#fff"/>
<text class="w f15" x="1547" y="1020">23</text>
<g fill="none" stroke="#fff" stroke-width="1.400"><circle cx="1597" cy="1006" r="2.800"/><circle cx="1597" cy="1023" r="2.800"/><path d="M1597 1009v11M1597 1016c4 0 6-3 8-3"/><circle cx="1607" cy="1007" r="2.800"/></g>
<circle cx="1606" cy="1022" r="4.500" fill="#fff"/>
<text class="w" x="1618" y="1020" style="font-size:16.800px">master</text>
<path d="M1672 1016h10l-5-5z" fill="#fff"/>
<path d="M1725 1005h16v4h-16zM1727 1009v13h6M1741 1009v5" fill="none" stroke="#fff" stroke-width="1.300"/><circle cx="1735" cy="1021" r="5" fill="#fff"/>
<text class="w" x="1748" y="1020" style="font-size:16.500px">peng-eshop</text>
<path d="M1883 1021c1-2 2-3 2-8a6 6 0 0 1 11 0c0 3 0 5 1 7v1z" fill="none" stroke="#fff" stroke-width="1.200"/>
<circle cx="1898" cy="1021" r="7.500" fill="#e3100e"/>
<text class="w f14" x="1894" y="1026">1</text>

<!-- watermark -->
<rect x="0" y="0" width="1920" height="1030" fill="url(#wm)"/>
</svg>
</body>
</html>
